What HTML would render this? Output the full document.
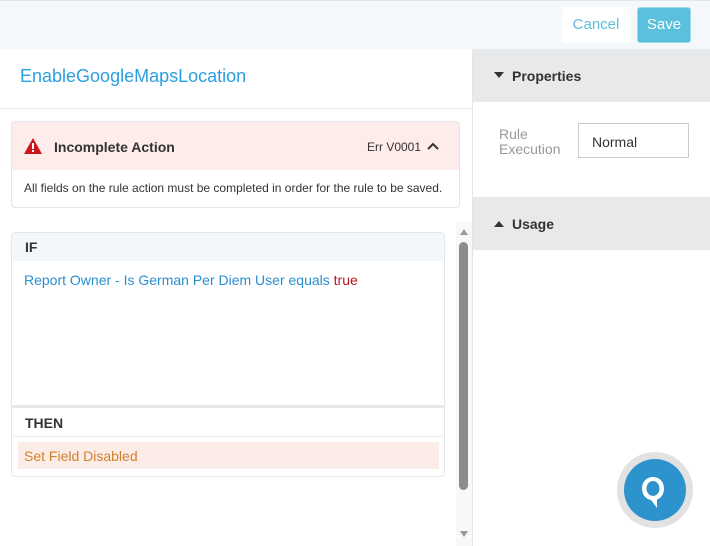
<!DOCTYPE html>
<html><head><style>
body{margin:0;width:710px;height:546px;overflow:hidden;font-family:"Liberation Sans",sans-serif;background:#fff;position:relative}
.a{position:absolute;box-sizing:border-box}
</style></head><body>
<div class="a" style="left:0;top:0;width:710px;height:49px;background:#f5f8fb;border-top:1px solid #e3e6e8"></div>
<div class="a" style="left:562px;top:7px;width:68px;height:36px;background:#fff;border-radius:3px;color:#5bc0de;font-size:15px;text-align:center;line-height:36px">Cancel</div>
<div class="a" style="left:637px;top:7px;width:54px;height:36px;background:#5bc0de;border:1px solid #9fd8ea;border-radius:3px;color:#fff;font-size:15px;text-align:center;line-height:34px">Save</div>

<div class="a" style="left:20px;top:66px;font-size:18px;color:#2a9fe0">EnableGoogleMapsLocation</div>
<div class="a" style="left:0;top:108px;width:472px;height:1px;background:#e3e6e8"></div>

<div class="a" style="left:11px;top:121px;width:449px;height:87px;border:1px solid #e5e5e5;border-radius:4px;overflow:hidden">
 <div class="a" style="left:0;top:0;width:449px;height:48px;background:#fdecea"></div>
 <svg class="a" style="left:12px;top:16px" width="18" height="16" viewBox="0 0 18 16"><path d="M9 0L18 16H0Z" fill="#d0141c"/><rect x="8" y="5" width="2" height="6" fill="#fff"/><rect x="8" y="12" width="2" height="2" fill="#fff"/></svg>
 <div class="a" style="left:42px;top:17px;font-size:14px;font-weight:bold;color:#333">Incomplete Action</div>
 <div class="a" style="left:355px;top:18px;font-size:12px;color:#333">Err V0001</div>
 <svg class="a" style="left:414px;top:19px" width="14" height="10" viewBox="0 0 14 10"><path d="M2 8L7 3L12 8" stroke="#333" stroke-width="2" fill="none"/></svg>
 <div class="a" style="left:12px;top:59px;font-size:12px;color:#333;white-space:nowrap">All fields on the rule action must be completed in order for the rule to be saved.</div>
</div>

<div class="a" style="left:11px;top:232px;width:434px;height:245px;border:1px solid #e3e6e8;border-radius:4px;overflow:hidden">
 <div class="a" style="left:0;top:0;width:434px;height:28px;background:#f4f7fa"></div>
 <div class="a" style="left:13px;top:6px;font-size:14px;font-weight:bold;color:#333">IF</div>
 <div class="a" style="left:12px;top:39px;font-size:14px;color:#2a8fd0;white-space:nowrap">Report Owner - Is German Per Diem User equals <span style="color:#c0141c">true</span></div>
 <div class="a" style="left:0;top:172px;width:434px;height:3px;background:#e6e6e6"></div>
 <div class="a" style="left:13px;top:182px;font-size:14px;font-weight:bold;color:#333">THEN</div>
 <div class="a" style="left:0;top:203px;width:434px;height:1px;background:#eee"></div>
 <div class="a" style="left:6px;top:209px;width:421px;height:27px;background:#fcece8"></div>
 <div class="a" style="left:12px;top:215px;font-size:14px;color:#d2802a">Set Field Disabled</div>
</div>

<div class="a" style="left:456px;top:222px;width:16px;height:324px;background:#f8f8f8"></div>
<svg class="a" style="left:459px;top:228px" width="10" height="8"><path d="M1 7L5 1L9 7Z" fill="#999"/></svg>
<svg class="a" style="left:459px;top:530px" width="10" height="8"><path d="M1 1L5 7L9 1Z" fill="#999"/></svg>
<div class="a" style="left:459px;top:242px;width:9px;height:248px;background:#8c8c8c;border-radius:5px"></div>

<div class="a" style="left:472px;top:49px;width:238px;height:497px;border-left:1px solid #e3e6e8;background:#fff"></div>
<div class="a" style="left:473px;top:49px;width:237px;height:53px;background:#e8e9eb"></div>
<svg class="a" style="left:494px;top:72px" width="10" height="6"><path d="M0 0H10L5 6Z" fill="#333"/></svg>
<div class="a" style="left:512px;top:68px;font-size:14px;font-weight:bold;color:#333">Properties</div>
<div class="a" style="left:499px;top:127px;font-size:14px;color:#999;line-height:15px">Rule<br>Execution</div>
<div class="a" style="left:578px;top:123px;width:111px;height:35px;border:1px solid #ccc;font-size:14px;color:#333;padding:10px 0 0 13px">Normal</div>
<div class="a" style="left:473px;top:197px;width:237px;height:53px;background:#e8e9eb"></div>
<svg class="a" style="left:494px;top:221px" width="10" height="6"><path d="M0 6H10L5 0Z" fill="#333"/></svg>
<div class="a" style="left:512px;top:216px;font-size:14px;font-weight:bold;color:#333">Usage</div>

<div class="a" style="left:617px;top:452px;width:76px;height:76px;border-radius:50%;background:#e2e2e2"></div>
<div class="a" style="left:624px;top:459px;width:62px;height:62px;border-radius:50%;background:#2d93cc"></div>
<svg class="a" style="left:641px;top:476px" width="24" height="34" viewBox="0 0 24 34"><path d="M12 1C5.5 1 1 6 1 12.5C1 19 5 23 10 24L16 32L16 23.5C20.5 22 23 17.5 23 12.5C23 6 18.5 1 12 1Z" fill="#fff"/><ellipse cx="12" cy="12.5" rx="6.5" ry="7.5" fill="#2d93cc"/></svg>
</body></html>
